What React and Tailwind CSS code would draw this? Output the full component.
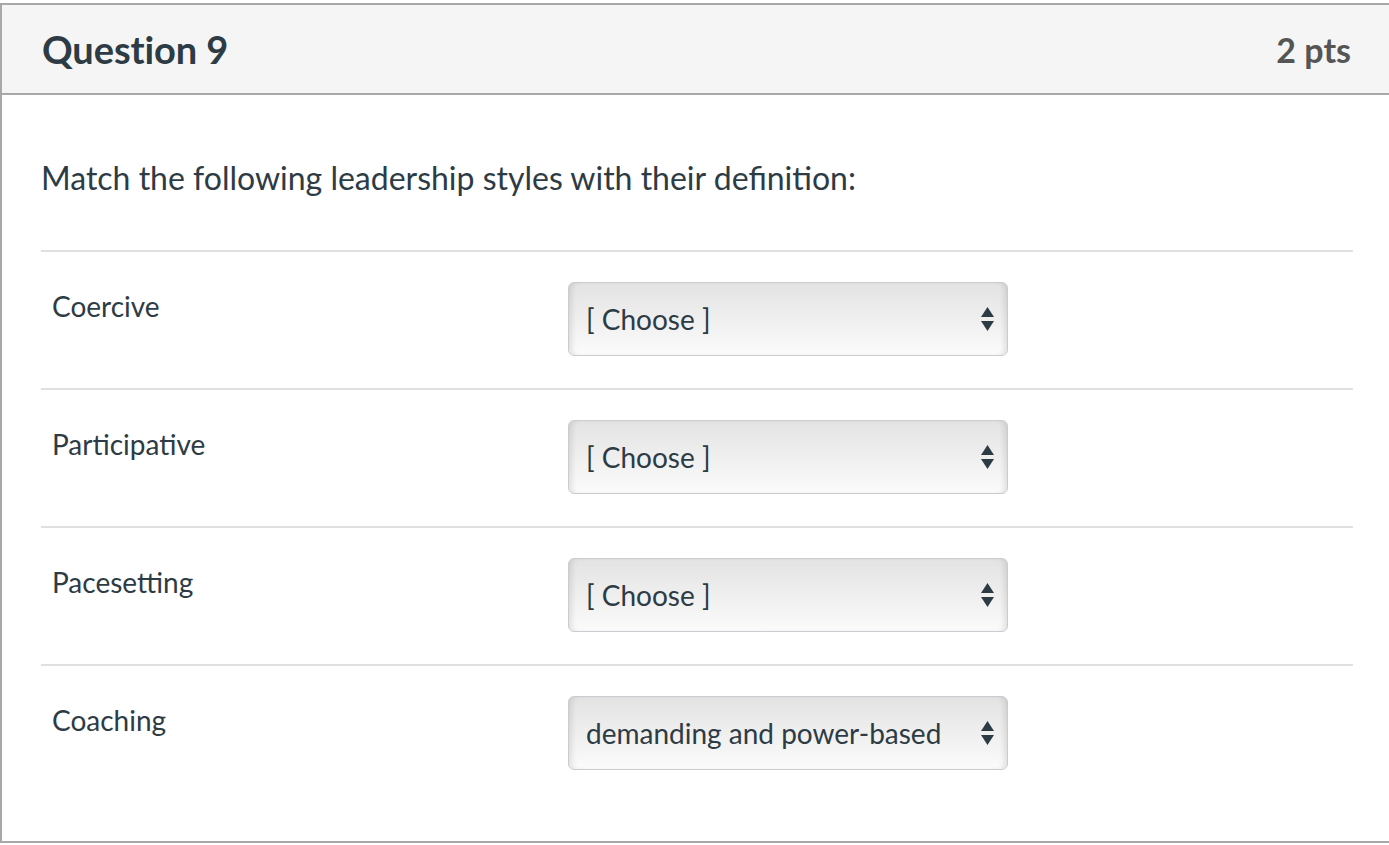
import React from 'react';

const rows = [
    { label: 'Coercive', value: '[ Choose ]' },
    { label: 'Participative', value: '[ Choose ]' },
    { label: 'Pacesetting', value: '[ Choose ]' },
    { label: 'Coaching', value: 'demanding and power-based' },
];

function SortArrows() {
    return (
        <svg width="13" height="24" viewBox="0 0 13 24" className="shrink-0">
            <polygon points="6.5,0 13,10 0,10" fill="#2d3b45" />
            <polygon points="0,14 13,14 6.5,24" fill="#2d3b45" />
        </svg>
    );
}

function MatchSelect({ value }) {
    return (
        <div className="h-[74px] w-[440px] rounded-[6px] border border-[#c9cdd1] bg-linear-to-b from-[#e3e3e3] to-[#fbfbfb] shadow-[inset_6px_0_6px_-4px_rgba(0,0,0,0.12),inset_-6px_0_6px_-4px_rgba(0,0,0,0.12)] flex items-center justify-between pl-[17px] pr-[13px]">
            <span className="text-[28px] text-[#2d3b45]">{value}</span>
            <SortArrows />
        </div>
    );
}

export default function App() {
    return (
        <div className="bg-white pt-[3px] font-['Lato','Liberation_Sans',sans-serif]">
            <div className="border-l-2 border-t-2 border-b-2 border-[#a8a8a8] w-[1400px]">
                {/* Header */}
                <header className="h-[90px] bg-[#f5f5f5] border-b-2 border-[#a8a8a8] flex items-center justify-between pl-[40px] pr-[49px]">
                    <h2 className="text-[38px] font-bold text-[#2d3b45] tracking-[-0.1px]">Question 9</h2>
                    <span className="text-[34px] font-bold text-[#555555]">2 pts</span>
                </header>

                {/* Body */}
                <div className="pl-[39px] w-[1351px] pb-[39px]">
                    <p className="pt-[58px] pb-[47px] text-[32px] leading-[50px] text-[#2d3b45]">
                        Match the following leadership styles with their definition:
                    </p>
                    <div>
                        {rows.map((row) => (
                            <div key={row.label} className="border-t-2 border-[#e0e0e0] grid grid-cols-[527px_440px] pt-[30px] pb-[32px]">
                                <div className="pl-[11px] pt-[6px] text-[28px] leading-[36px] text-[#2d3b45]">{row.label}</div>
                                <MatchSelect value={row.value} />
                            </div>
                        ))}
                    </div>
                </div>
            </div>
        </div>
    );
}
